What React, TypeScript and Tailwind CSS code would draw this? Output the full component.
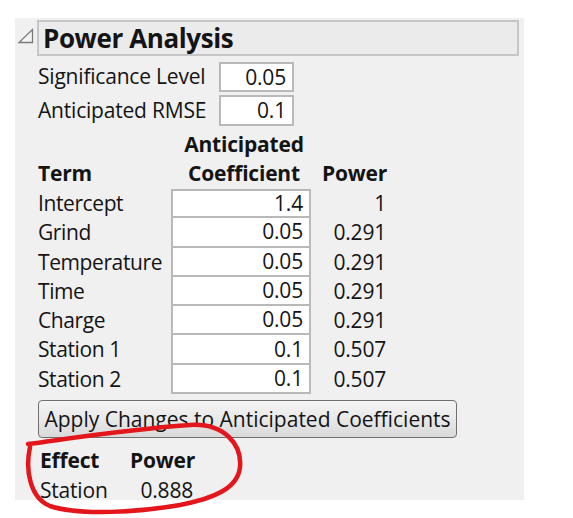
import React from 'react';

type Row = { term: string; coef: string; power: string };

const rows: Row[] = [
    { term: 'Intercept', coef: '1.4', power: '1' },
    { term: 'Grind', coef: '0.05', power: '0.291' },
    { term: 'Temperature', coef: '0.05', power: '0.291' },
    { term: 'Time', coef: '0.05', power: '0.291' },
    { term: 'Charge', coef: '0.05', power: '0.291' },
    { term: 'Station 1', coef: '0.1', power: '0.507' },
    { term: 'Station 2', coef: '0.1', power: '0.507' },
];

const NumBox: React.FC<{ value: string; className?: string }> = ({ value, className = '' }) => (
    <div className={`bg-white border-2 border-[#b9b9b9] pr-[6px] leading-none flex items-center justify-end ${className}`}>
        {value}
    </div>
);

export default function App() {
    return (
        <div
            className="relative w-[573px] h-[518px] bg-white text-[#141414] overflow-hidden"
            style={{ fontFamily: '"Open Sans", "Noto Sans", sans-serif' }}
        >
            <div className="absolute left-[15px] top-[18px] w-[509px] h-[482px] bg-[#f0f0f0] text-[21px] tracking-[-0.2px]">
                {/* outline header */}
                <div className="flex items-start pt-[2px] pr-[5px]">
                    <svg width="21" height="20" viewBox="0 0 21 20" className="mt-[8px] ml-[1px] shrink-0">
                        <path d="M16.5 1.5 L16.5 14.5 L3 14.5 Z" fill="#f4f4f4" stroke="#7a7a7a" strokeWidth="1.3" />
                    </svg>
                    <div className="flex-1 h-[36px] bg-[#ebebeb] border-2 border-[#c6c6c6] flex items-center pl-[4px]">
                        <span className="text-[26px] font-bold tracking-[-0.4px] leading-none">Power Analysis</span>
                    </div>
                </div>

                {/* inputs */}
                <div className="pl-[23px] mt-[6px] flex flex-col gap-[3px]">
                    <div className="flex items-center h-[30px]">
                        <span className="w-[181px]">Significance Level</span>
                        <NumBox value="0.05" className="w-[75px] h-[30px]" />
                    </div>
                    <div className="flex items-center h-[31px]">
                        <span className="w-[181px]">Anticipated RMSE</span>
                        <NumBox value="0.1" className="w-[75px] h-[31px]" />
                    </div>
                </div>

                {/* term table */}
                <div className="pl-[23px] mt-[4px]">
                    <div className="flex items-end font-bold leading-[29px]">
                        <span className="w-[133px]">Term</span>
                        <span className="w-[140px] text-center pl-[6px]">Anticipated<br />Coefficient</span>
                        <span className="w-[76px] text-right">Power</span>
                    </div>
                    <div className="mt-[1px]">
                        {rows.map((r, i) => (
                            <div key={r.term} className="flex items-center h-[29.3px]">
                                <span className="w-[133px] whitespace-nowrap tracking-[-0.4px]">{r.term}</span>
                                <NumBox
                                    value={r.coef}
                                    className={`w-[140px] h-full ${i > 0 ? 'border-t-0' : ''}`}
                                />
                                <span className="w-[75px] text-right">{r.power}</span>
                            </div>
                        ))}
                    </div>
                </div>

                <div className="pl-[23px] mt-[6px]">
                    <button className="w-[419px] h-[38px] rounded-[4px] border border-[#707070] bg-gradient-to-b from-[#f4f4f4] via-[#e9e9e9] to-[#d9d9d9] text-[21px] leading-none tracking-[0px]">
                        Apply Changes to Anticipated Coefficients
                    </button>
                </div>

                {/* effect tests */}
                <div className="pl-[25px] mt-[7px] leading-[30px]">
                    <div className="flex font-bold">
                        <span className="w-[90px]">Effect</span>
                        <span className="w-[66px]">Power</span>
                    </div>
                    <div className="flex">
                        <span className="w-[90px]">Station</span>
                        <span className="w-[63px] text-right">0.888</span>
                    </div>
                </div>
            </div>

            {/* hand-drawn mark */}
            <svg className="absolute left-0 top-0 pointer-events-none" width="573" height="518">
                <path
                    d="M28 444 C 60 440, 120 430, 190 425 C 225 423, 242 445, 240 467 C 238 488, 215 498, 180 505 C 140 512, 80 516, 50 506 C 30 498, 25 470, 30 447"
                    fill="none"
                    stroke="#e3161c"
                    strokeWidth="4.5"
                    strokeLinecap="round"
                />
            </svg>
        </div>
    );
}
